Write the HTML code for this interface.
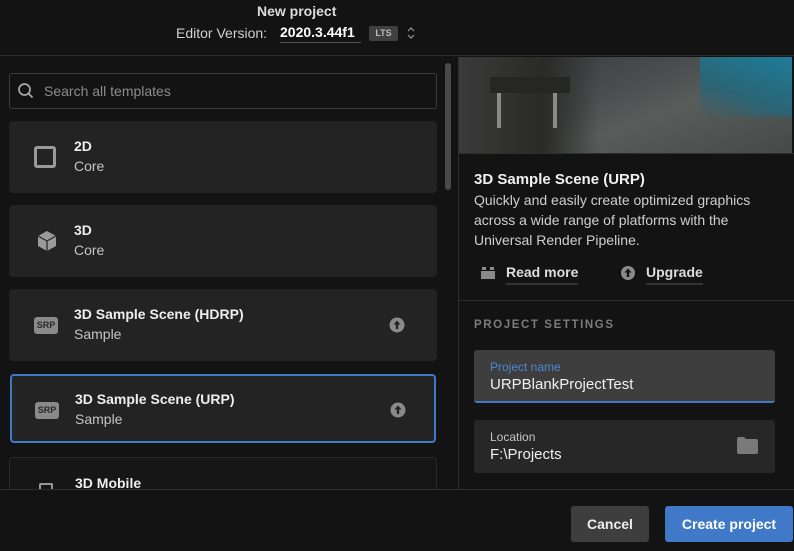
<!DOCTYPE html>
<html><head><style>
*{box-sizing:border-box;margin:0;padding:0}
body{width:794px;height:551px;background:#131313;font-family:"Liberation Sans",sans-serif;color:#e4e4e4;position:relative;overflow:hidden;font-size:14px}
.abs{position:absolute}
.card{position:absolute;left:9px;width:428px;height:72px;background:#232323;border-radius:4px}
.card .t{position:absolute;left:65px;top:17px;font-size:14px;font-weight:bold;color:#eee}
.card .s{position:absolute;left:65px;top:37px;font-size:14px;color:#c4c4c4}
.srp{position:absolute;left:25px;top:28px;width:24px;height:17px;background:#8a8a8a;border-radius:3px;color:#2a2a2a;font-size:9px;font-weight:bold;text-align:center;line-height:17px}
.up{position:absolute;left:380px;top:28px}
</style></head><body>
<div class="abs" style="left:0;top:0;width:794px;height:56px;border-bottom:1px solid #2e2e2e"></div>
<div class="abs" style="left:257px;top:3px;font-size:14px;font-weight:bold;color:#ddd">New project</div>
<div class="abs" style="left:176px;top:25px;font-size:14px;color:#d0d0d0">Editor Version:</div>
<div class="abs" style="left:280px;top:24px;font-size:14px;font-weight:bold;color:#fff;border-bottom:1px solid #555;padding-bottom:2px;width:81px">2020.3.44f1</div>
<div class="abs" style="left:369px;top:26px;width:29px;height:15px;background:#404040;border-radius:2px;font-size:9px;font-weight:bold;color:#bbb;text-align:center;line-height:15px">LTS</div>
<svg class="abs" style="left:405px;top:25px" width="12" height="16"><path d="M3 6l3-3 3 3M3 10l3 3 3-3" stroke="#999" fill="none" stroke-width="1.2"/></svg>

<div class="abs" style="left:445px;top:63px;width:6px;height:127px;background:#4a4a4a;border-radius:3px"></div>
<div class="abs" style="left:9px;top:73px;width:428px;height:36px;border:1px solid #3c3c3c;border-radius:3px"></div>
<svg class="abs" style="left:17px;top:82px" width="18" height="18"><circle cx="7.5" cy="7.5" r="5.5" stroke="#aaa" stroke-width="1.7" fill="none"/><path d="M11.5 11.5l4 4" stroke="#aaa" stroke-width="1.8"/></svg>
<div class="abs" style="left:44px;top:83px;font-size:14px;color:#8c8c8c">Search all templates</div>

<div class="card" style="top:121px"><div class="abs" style="left:25px;top:25px;width:22px;height:22px;border:3px solid #9a9a9a;border-radius:3px"></div><div class="t">2D</div><div class="s">Core</div></div>
<div class="card" style="top:205px"><svg class="abs" style="left:28px;top:25px" width="20" height="22"><path d="M10 1l9 5v10l-9 5-9-5V6z" fill="#9a9a9a"/><path d="M1 6l9 5 9-5M10 11v10" stroke="#232323" stroke-width="1.2" fill="none"/></svg><div class="t">3D</div><div class="s">Core</div></div>
<div class="card" style="top:289px"><div class="srp">SRP</div><div class="t">3D Sample Scene (HDRP)</div><div class="s">Sample</div><svg class="up" width="16" height="16"><circle cx="8" cy="8" r="7.5" fill="#8a8a8a"/><path d="M8 3.5l-3.5 4h2.3v4.5h2.4V7.5h2.3z" fill="#232323"/></svg></div>
<div class="card" style="top:374px;height:69px;border:2px solid #3f79c7;left:10px;width:426px"><div class="srp" style="left:23px;top:26px">SRP</div><div class="t" style="left:63px;top:15px">3D Sample Scene (URP)</div><div class="s" style="left:63px;top:35px">Sample</div><svg class="up" style="left:378px;top:26px" width="16" height="16"><circle cx="8" cy="8" r="7.5" fill="#8a8a8a"/><path d="M8 3.5l-3.5 4h2.3v4.5h2.4V7.5h2.3z" fill="#232323"/></svg></div>
<div class="card" style="top:457px;background:#161616;border:1px solid #2a2a2a"><div class="abs" style="left:29px;top:25px;width:14px;height:10px;border:2px solid #999;border-bottom:none;border-radius:2px"></div><div class="t">3D Mobile</div></div>

<div class="abs" style="left:458px;top:57px;width:1px;height:432px;background:#2e2e2e"></div>
<div class="abs" style="left:459px;top:57px;width:333px;height:96px;background:linear-gradient(160deg,#34373a 0%,#4a4d4e 40%,#585c5a 60%,#454948 100%)"></div>
<div class="abs" style="left:700px;top:57px;width:92px;height:60px;background:linear-gradient(200deg,#1e7c9a,#2a6575 60%,transparent)"></div>
<div class="abs" style="left:459px;top:57px;width:140px;height:96px;background:linear-gradient(90deg,#3a3a3a,#2a2a28 60%,transparent)"></div>
<div class="abs" style="left:490px;top:77px;width:80px;height:16px;background:#262624"></div>
<div class="abs" style="left:497px;top:93px;width:4px;height:35px;background:#8a8a8a"></div>
<div class="abs" style="left:553px;top:93px;width:4px;height:35px;background:#8a8a8a"></div>
<div class="abs" style="left:458px;top:153px;width:336px;height:1px;background:#2e2e2e"></div>

<div class="abs" style="left:474px;top:171px;font-size:15px;font-weight:bold;color:#f0f0f0">3D Sample Scene (URP)</div>
<div class="abs" style="left:474px;top:190px;font-size:14px;line-height:20px;color:#cfcfcf;width:310px">Quickly and easily create optimized graphics across a wide range of platforms with the Universal Render Pipeline.</div>
<svg class="abs" style="left:481px;top:266px" width="14" height="13"><path d="M0 5h14v8H0z" fill="#8a8a8a"/><path d="M1 1h4v3H1zM9 1h4v3H9z" fill="#8a8a8a"/></svg>
<div class="abs" style="left:506px;top:264px;font-size:14px;font-weight:bold;color:#ddd;border-bottom:2px solid #333;padding-bottom:3px">Read more</div>
<svg class="abs" style="left:620px;top:265px" width="16" height="16"><circle cx="8" cy="8" r="7" fill="#8a8a8a"/><path d="M8 3.5l-3.5 4h2.3v4.5h2.4V7.5h2.3z" fill="#131313"/></svg>
<div class="abs" style="left:646px;top:264px;font-size:14px;font-weight:bold;color:#ddd;border-bottom:2px solid #333;padding-bottom:3px">Upgrade</div>
<div class="abs" style="left:458px;top:300px;width:336px;height:1px;background:#2e2e2e"></div>
<div class="abs" style="left:474px;top:319px;font-size:11.5px;font-weight:bold;letter-spacing:1.6px;color:#7c7c7c">PROJECT SETTINGS</div>
<div class="abs" style="left:474px;top:350px;width:301px;height:53px;background:#3e3e3e;border-radius:3px;border-bottom:2px solid #3f79c7"></div>
<div class="abs" style="left:490px;top:360px;font-size:12px;color:#4f86d0">Project name</div>
<div class="abs" style="left:490px;top:376px;font-size:15px;color:#f0f0f0">URPBlankProjectTest</div>
<div class="abs" style="left:474px;top:420px;width:301px;height:53px;background:#272727;border-radius:3px"></div>
<div class="abs" style="left:490px;top:430px;font-size:12px;color:#c4c4c4">Location</div>
<div class="abs" style="left:490px;top:446px;font-size:15px;color:#f0f0f0">F:\Projects</div>
<svg class="abs" style="left:737px;top:437px" width="21" height="17"><path d="M0 2q0-2 2-2h5l2 2h10q2 0 2 2v11q0 2-2 2H2q-2 0-2-2z" fill="#7a7a7a"/></svg>

<div class="abs" style="left:0;top:489px;width:794px;height:62px;background:#131313;border-top:1px solid #2e2e2e"></div>
<div class="abs" style="left:571px;top:506px;width:78px;height:36px;background:#3e3e3e;border-radius:3px;color:#eee;font-weight:bold;font-size:14px;text-align:center;line-height:36px">Cancel</div>
<div class="abs" style="left:665px;top:506px;width:128px;height:36px;background:#3f79c7;border-radius:3px;color:#fff;font-weight:bold;font-size:14px;text-align:center;line-height:36px">Create project</div>
</body></html>
